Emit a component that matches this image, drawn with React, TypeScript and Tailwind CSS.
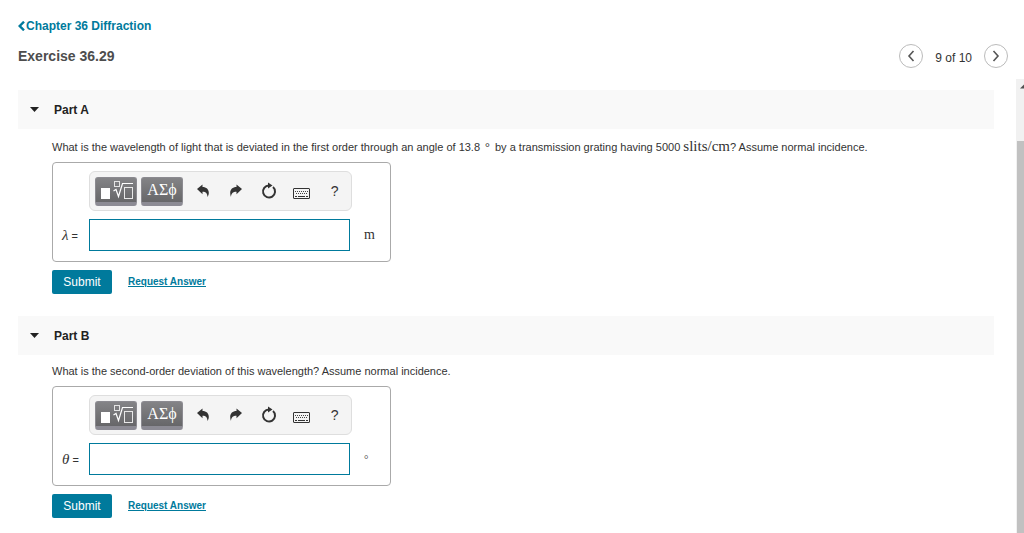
import type { ReactNode } from "react"

const TemplatesIcon = () => (
    <svg width="33" height="20" viewBox="0 0 33 20" fill="none" aria-hidden="true">
        <rect x="1" y="8" width="9" height="11" fill="#fff" />
        <rect x="14.5" y="1.5" width="5" height="5" stroke="#e4e4e4" />
        <path d="M13.500 11l2.500-1.500 2.500 7L22.500 3.500H33" stroke="#fff" strokeWidth="1.200" />
        <rect x="24.500" y="7.500" width="8" height="11" stroke="#e8e8e8" />
    </svg>
)

const UndoIcon = () => (
    <svg width="12" height="14" viewBox="0 0 12 14" fill="#333" aria-hidden="true">
        <path d="M0 5L5.500 0.500v2.500c3.800 0 6.300 2.400 6.300 5.700 0 1.700-.5 3-1.300 4.300-.1-3.400-1.300-5.300-5-5.300v2.600z" />
    </svg>
)

const RedoIcon = () => (
    <svg width="12" height="14" viewBox="0 0 12 14" fill="#333" aria-hidden="true">
        <path d="M12 5L6.500 0.500v2.500C2.700 3 0.200 5.400 0.200 8.700c0 1.700.2 3 .8 4.300.1-3.400 1.800-5.300 5.500-5.300v2.600z" />
    </svg>
)

const ResetIcon = () => (
    <svg width="16" height="18" viewBox="0 0 16 18" fill="none" aria-hidden="true">
        <path d="M12 5A6 6 0 1 1 8 3.500" stroke="#333" strokeWidth="2" />
        <path d="M7 0.500l4.500 3L7 6.500z" fill="#333" />
    </svg>
)

const KeyboardIcon = () => (
    <svg width="17" height="11" viewBox="0 0 17 11" fill="none" aria-hidden="true">
        <rect x="0.5" y="0.5" width="16" height="10" rx="0.5" stroke="#333" />
        <path d="M2 3.500h13" stroke="#444" strokeDasharray="1 1" />
        <path d="M3 5.500h12" stroke="#444" strokeDasharray="1 1" />
        <path d="M2 8.500h2M5 8.500h7M13 8.500h2" stroke="#333" />
    </svg>
)

const Chevron = ({ d }: { d: string }) => (
    <svg width="8" height="12" viewBox="0 0 8 12" fill="none" stroke="#555" strokeWidth="1.600" aria-hidden="true">
        <path d={d} />
    </svg>
)

const darkButton =
    "h-[29px] flex items-center justify-center rounded-[3px] border border-[#8b8a90] border-b-4 border-b-[#8c8b94] bg-linear-to-b from-[#858588] to-[#626264] bg-origin-border text-white"
const toolButton = "h-7 flex-1 flex items-center justify-center text-[#333]"

const Toolbar = () => (
    <div className="w-[263px] h-10 pl-[5px] flex items-center rounded-md border border-[#dedede] bg-[#f4f4f4]">
        <button aria-label="Templates" className={`${darkButton} w-[42px]`}><TemplatesIcon /></button>
        <button aria-label="Symbols" className={`${darkButton} w-[42px] mx-1 font-['Liberation_Serif',serif] text-base leading-4`}>ΑΣϕ</button>
        <button aria-label="Undo" className={toolButton}><UndoIcon /></button>
        <button aria-label="Redo" className={toolButton}><RedoIcon /></button>
        <button aria-label="Reset" className={toolButton}><ResetIcon /></button>
        <button aria-label="Keyboard shortcuts" className={`${toolButton} pt-1`}><KeyboardIcon /></button>
        <button aria-label="Help" className={`${toolButton} text-sm`}>?</button>
    </div>
)

type PartProps = {
    id: string
    title: string
    question: ReactNode
    symbol: string
    unit: ReactNode
}

const Part = ({ id, title, question, symbol, unit }: PartProps) => (
    <section className="mb-[22px]">
        <h2 className="h-[39px] mr-[22px] bg-[#f9f9f9] text-xs font-bold text-[#222]">
            <button className="h-full w-full pl-3 flex items-center gap-[15px]">
                <svg width="9" height="5" viewBox="0 0 9 5" fill="#222" aria-hidden="true">
                    <path d="M0 0h9L4.500 5z" />
                </svg>
                {title}
            </button>
        </h2>
        <div className="pl-[34px] pr-[22px]">
            <p className="pt-2 pb-[7px] text-[11px] leading-4 text-[#333]">{question}</p>

            {/* ANSWER BOX */}
            <div className="w-[339px] h-[100px] pt-2 pl-[9px] grid grid-cols-[auto_auto_1fr] grid-rows-[auto_auto] content-start gap-y-2 rounded-[4px] border border-[#aaa]">
                <div className="col-start-2"><Toolbar /></div>
                <label htmlFor={id} className="col-start-1 w-[27px] self-center text-[11px] leading-4 text-[#333]">
                    <i className="font-['Liberation_Serif',serif] text-[15px] leading-4">{symbol}</i> =
                </label>
                <input id={id} type="text" className="w-[261px] h-8 px-2 border border-[#007a9c] bg-white text-sm outline-none" />
                <span className="self-center pl-3 font-['Liberation_Serif',serif] text-sm text-[#333]">{unit}</span>
            </div>

            <div className="mt-2 flex items-center gap-4">
                <button className="w-[60px] h-6 rounded-[2px] bg-[#007a9c] text-xs text-white">Submit</button>
                <a href="#" className="pb-0.5 text-[10px] font-bold text-[#007a9c] underline">Request Answer</a>
            </div>
        </div>
    </section>
)

const App = () => {
    return (
        <div className="h-screen flex flex-col overflow-hidden bg-white font-['Liberation_Sans',Arial,sans-serif]">

            {/* HEADER */}
            <header className="h-[79px] shrink-0 pl-[18px] pr-4 pt-[18px]">
                <a href="#" className="flex items-center gap-px h-4 text-xs font-bold text-[#007a9c]">
                    <svg width="7" height="10" viewBox="0 0 7 10" fill="none" stroke="#007a9c" strokeWidth="2.400" aria-hidden="true">
                        <path d="M6 0.700L1.700 5 6 9.300" />
                    </svg>
                    Chapter 36 Diffraction
                </a>
                <div className="mt-2.5 flex items-center justify-between">
                    <h1 className="text-sm font-bold text-[#4d4d4d]">Exercise 36.29</h1>
                    <nav className="flex items-center gap-3 text-xs text-[#333]">
                        <button aria-label="Previous" className="size-6 flex items-center justify-center rounded-full border border-[#bbb]">
                            <Chevron d="M6.500 1L2 6l4.500 5" />
                        </button>
                        <span className="pt-1">9 of 10</span>
                        <button aria-label="Next" className="size-6 flex items-center justify-center rounded-full border border-[#bbb]">
                            <Chevron d="M1.500 1L6 6l-4.500 5" />
                        </button>
                    </nav>
                </div>
            </header>

            <div className="flex flex-1 min-h-0">
                <main className="flex-1 min-w-0 overflow-hidden pl-[18px] pt-[11px]">
                    <Part
                        id="part-a"
                        title="Part A"
                        symbol="λ"
                        unit="m"
                        question={
                            <>
                                What is the wavelength of light that is deviated in the first order through an angle of 13.8{" "}
                                <span className="px-0.5 font-['Liberation_Serif',serif] text-xs leading-4">°</span> by a transmission grating having 5000{" "}
                                <span className="font-['Liberation_Serif',serif] text-[15px] leading-[18px]">slits/cm</span>? Assume normal incidence.
                            </>
                        }
                    />
                    <Part
                        id="part-b"
                        title="Part B"
                        symbol="θ"
                        unit={<span className="text-[11px]">°</span>}
                        question="What is the second-order deviation of this wavelength? Assume normal incidence."
                    />
                </main>

                {/* SCROLLBAR */}
                <div className="w-2 shrink-0 flex flex-col overflow-hidden bg-[#f1f1f1]">
                    <svg width="8" height="17" viewBox="0 0 8 17" fill="#505050" className="shrink-0" aria-hidden="true">
                        <path d="M4 9.500L8 5.500v4z" />
                    </svg>
                    <div className="mt-[45px] ml-px flex-1 bg-[#c1c1c1]" />
                </div>
            </div>
        </div>
    )
}

export default App
